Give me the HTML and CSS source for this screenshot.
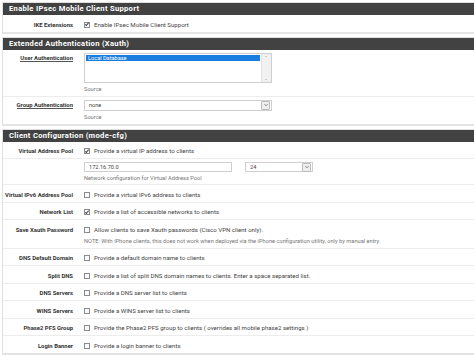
FILE: index.html
```html
<!DOCTYPE html>
<html lang="en">
<head>
    <meta charset="UTF-8">
    <meta name="viewport" content="width=device-width, initial-scale=1.0">
    <title>IPsec Mobile Clients</title>
    <link rel="stylesheet" href="styles.css">
</head>
<body>

<div class="panel">
    <div class="panel-heading">Enable IPsec Mobile Client Support</div>
    <div class="row first">
        <div class="label">IKE Extensions</div>
        <div class="content">
            <span class="check checked"></span>Enable IPsec Mobile Client Support
        </div>
    </div>
</div>

<div class="panel">
    <div class="panel-heading">Extended Authentication (Xauth)</div>
    <div class="row first auth">
        <div class="label"><span class="ul">User Authentication</span></div>
        <div class="content">
            <div class="listbox">
                <div class="options">
                    <div class="option selected">Local Database</div>
                </div>
                <div class="scrollbar">
                    <span class="arrow up"></span>
                    <span class="arrow down"></span>
                </div>
            </div>
            <div class="help">Source</div>
        </div>
    </div>
    <div class="row auth group">
        <div class="label"><span class="ul">Group Authentication</span></div>
        <div class="content">
            <div class="select wide">
                <span class="value">none</span>
                <span class="drop"><svg viewBox="0 0 6 6" width="6" height="6"><path d="M1.5 2.2 L3 3.8 L4.5 2.2" fill="none" stroke="#666" stroke-width="0.8"/></svg></span>
            </div>
            <div class="help">Source</div>
        </div>
    </div>
</div>

<div class="panel cfg">
    <div class="panel-heading">Client Configuration (mode-cfg)</div>
    <div class="row first">
        <div class="label">Virtual Address Pool</div>
        <div class="content"><span class="check checked"></span>Provide a virtual IP address to clients</div>
    </div>
    <div class="row pool">
        <div class="label"></div>
        <div class="content">
            <div class="pool-fields">
                <div class="input">172.16.70.0</div>
                <div class="select small">
                    <span class="value">24</span>
                    <span class="drop"><svg viewBox="0 0 6 6" width="6" height="6"><path d="M1.5 2.2 L3 3.8 L4.5 2.2" fill="none" stroke="#666" stroke-width="0.8"/></svg></span>
                </div>
            </div>
            <div class="help">Network configuration for Virtual Address Pool</div>
        </div>
    </div>
    <div class="row">
        <div class="label">Virtual IPv6 Address Pool</div>
        <div class="content"><span class="check"></span>Provide a virtual IPv6 address to clients</div>
    </div>
    <div class="row">
        <div class="label">Network List</div>
        <div class="content"><span class="check checked"></span>Provide a list of accessible networks to clients</div>
    </div>
    <div class="row">
        <div class="label">Save Xauth Password</div>
        <div class="content">
            <span class="check"></span>Allow clients to save Xauth passwords (Cisco VPN client only).
            <div class="help note">NOTE: With iPhone clients, this does not work when deployed via the iPhone configuration utility, only by manual entry.</div>
        </div>
    </div>
    <div class="row">
        <div class="label">DNS Default Domain</div>
        <div class="content"><span class="check"></span>Provide a default domain name to clients</div>
    </div>
    <div class="row">
        <div class="label">Split DNS</div>
        <div class="content"><span class="check"></span>Provide a list of split DNS domain names to clients. Enter a space separated list.</div>
    </div>
    <div class="row">
        <div class="label">DNS Servers</div>
        <div class="content"><span class="check"></span>Provide a DNS server list to clients</div>
    </div>
    <div class="row">
        <div class="label">WINS Servers</div>
        <div class="content"><span class="check"></span>Provide a WINS server list to clients</div>
    </div>
    <div class="row">
        <div class="label">Phase2 PFS Group</div>
        <div class="content"><span class="check"></span>Provide the Phase2 PFS group to clients ( overrides all mobile phase2 settings )</div>
    </div>
    <div class="row">
        <div class="label">Login Banner</div>
        <div class="content"><span class="check"></span>Provide a login banner to clients</div>
    </div>
</div>

</body>
</html>
```

FILE: styles.css
```css
body {
    font-family: Roboto, "Liberation Sans", sans-serif;
    font-size: 6px;
    color: #444;
    background-color: #ffffff;
    margin: 0;
    padding: 2px 0 0 2px;
}

.panel {
    border: 1px solid #e0e0e0;
    border-right: none;
    border-bottom: 2px solid #e4e4e4;
    margin-bottom: 3px;
    background-color: #fff;
}

.panel.cfg {
    margin-top: 1px;
}

.panel-heading {
    background-color: #424242;
    color: #fff;
    font-weight: bold;
    font-size: 7.6px;
    letter-spacing: 0.3px;
    height: 12px;
    line-height: 12px;
    padding-left: 6px;
}

.row {
    display: flex;
    align-items: flex-start;
    border-top: 1px solid #ececec;
    padding: 5.5px 0 3px 0;
    line-height: 8px;
    height: 8px;
}

.row.first {
    border-top: none;
}

.label {
    width: 70px;
    flex: none;
    text-align: right;
    font-weight: bold;
    color: #333;
    font-size: 5.9px;
}

.ul {
    border-bottom: 1px solid #555;
}

.content {
    margin-left: 11px;
    flex: 1;
    white-space: nowrap;
    font-size: 6.1px;
}

.check {
    display: inline-block;
    box-sizing: border-box;
    width: 6px;
    height: 6px;
    border: 1px solid #8a8a8a;
    vertical-align: top;
    margin-top: 1px;
    margin-right: 4px;
    position: relative;
    background-color: #fafafa;
}

.check.checked::after {
    content: "";
    position: absolute;
    left: 1.2px;
    top: -0.2px;
    width: 1.4px;
    height: 2.8px;
    border: solid #444;
    border-width: 0 1px 1px 0;
    transform: rotate(40deg);
}

.help {
    color: #777;
    font-size: 5.7px;
    margin-top: 3px;
}

.row:has(.note) {
    height: 19px;
}

.auth {
    height: auto;
    padding-top: 4px;
    padding-bottom: 3px;
}

.auth .help {
    margin-top: 2px;
}

.listbox {
    display: flex;
    width: 186px;
    height: 28px;
    border: 1px solid #cfcfcf;
    margin-top: -1px;
}

.options {
    flex: 1;
    padding: 1px;
}

.option {
    height: 6px;
    line-height: 6px;
    font-size: 5.6px;
    padding-left: 2px;
}

.option.selected {
    background-color: #1b7ddf;
    color: #fff;
}

.scrollbar {
    width: 9px;
    background-color: #f1f1f1;
    border-left: 1px solid #e2e2e2;
    position: relative;
}

.arrow {
    position: absolute;
    left: 3px;
    width: 0;
    height: 0;
    border-left: 1.5px solid transparent;
    border-right: 1.5px solid transparent;
}

.arrow.up {
    top: 2px;
    border-bottom: 1.5px solid #aaa;
}

.arrow.down {
    bottom: 2px;
    border-top: 1.5px solid #aaa;
}

.group {
    padding-top: 3px;
    padding-bottom: 3px;
}

.group .label {
    margin-top: 1px;
}

.select {
    display: flex;
    align-items: center;
    height: 9px;
    border: 1px solid #cfcfcf;
    background-color: #fff;
    font-size: 5.6px;
}

.select .value {
    flex: 1;
    padding-left: 4px;
}

.select .drop {
    width: 7px;
    height: 7px;
    margin-right: 1px;
    border: 1px solid #bbb;
    border-radius: 1px;
    background-color: #eee;
    display: flex;
    align-items: center;
    justify-content: center;
}

.select.wide {
    width: 186px;
}

.select.small {
    width: 66px;
    height: 8px;
    margin-left: 13px;
}

.pool {
    height: auto;
    padding-top: 3px;
    padding-bottom: 2px;
}

.pool .help {
    margin-top: 2px;
}

.pool-fields {
    display: flex;
}

.input {
    width: 142px;
    height: 8px;
    line-height: 8px;
    border: 1px solid #cfcfcf;
    padding-left: 4px;
    font-size: 5.6px;
}
```
